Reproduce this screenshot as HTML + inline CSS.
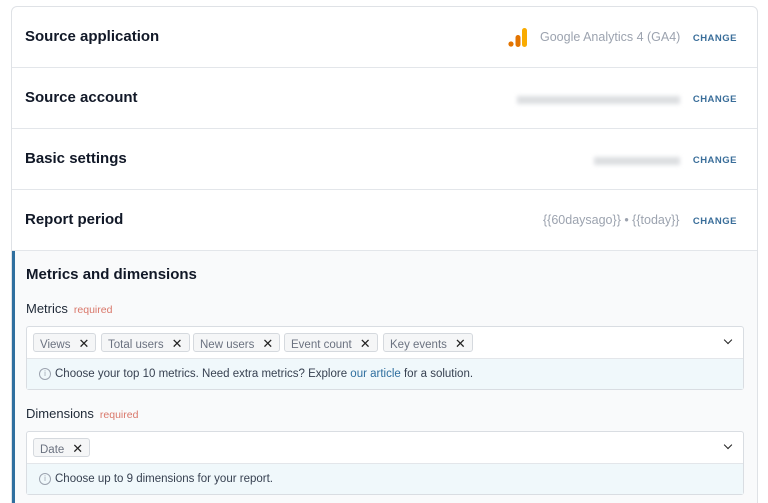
<html style="height:503px;overflow:hidden"><head><style>
body{margin:0;width:768px;height:503px;overflow:hidden;background:#fff;font-family:"Liberation Sans",sans-serif;position:relative;}
.wrap{position:absolute;left:0;top:0;width:768px;height:503px;overflow:hidden;}
.box{position:absolute;left:11px;top:6px;width:745px;height:496px;border:1px solid #dfe2e6;border-radius:6px 6px 0 0;overflow:hidden;}
.row{height:60px;border-bottom:1px solid #e3e6ea;position:relative;}
.row h{position:absolute;left:13px;top:21px;font-weight:bold;font-size:15px;color:#111827;}
.ch{position:absolute;right:20px;top:26px;font-size:9.5px;font-weight:bold;color:#3a6e9a;letter-spacing:.5px;}
.val{position:absolute;top:23px;font-size:12.5px;color:#9ca3af;}
.blur{position:absolute;height:8px;background:#dcdee1;filter:blur(2px);}
.sec{position:absolute;left:0;top:244px;width:742px;height:252px;background:#f9fafb;border-left:3px solid #2f6f9f;}
.ti{position:absolute;left:11px;font-size:15px;font-weight:bold;color:#111827;}
.lab{position:absolute;left:11px;font-size:13px;color:#1f2937;}
.lab span{color:#d9776a;font-size:10.5px;margin-left:6px;}
.inp{position:absolute;left:11px;width:716px;border:1px solid #d9dde2;border-radius:3px;background:#fff;}
.chips{height:31px;position:relative;border-bottom:1px solid #e3e6ea;}
.chip{position:absolute;top:6px;height:19px;border:1px solid #d5d9de;border-radius:3px;background:#f5f6f7;font-size:11.5px;color:#6b7280;line-height:19px;padding:0 6px;box-sizing:border-box;}
.chip b{color:#222;font-weight:normal;margin-left:8px;font-size:13px;}
.info{height:30px;background:#f0f8fb;font-size:11.5px;color:#374151;line-height:30px;padding-left:28px;position:relative;}
.info:before{content:"i";position:absolute;left:12px;top:9px;width:10px;height:10px;border:1px solid #9ca3af;border-radius:50%;font-size:8px;line-height:10px;text-align:center;color:#9ca3af;}
.car{position:absolute;right:12px;top:10px;width:5px;height:5px;border-right:1.5px solid #222;border-bottom:1.5px solid #222;transform:rotate(45deg);}
</style></head><body><div class="wrap">
<div class="box">
<div class="row"><h>Source application</h>
<svg style="position:absolute;left:496px;top:20px" width="20" height="22"><circle cx="3" cy="17" r="2.6" fill="#e37400"/><rect x="7.5" y="8" width="5" height="12" rx="2.5" fill="#e37400"/><rect x="14" y="1" width="5" height="19" rx="2.5" fill="#f9ab00"/></svg>
<div class="val" style="left:528px">Google Analytics 4 (GA4)</div><div class="ch">CHANGE</div></div>
<div class="row"><h>Source account</h><div class="blur" style="left:505px;top:28px;width:163px"></div><div class="ch">CHANGE</div></div>
<div class="row"><h>Basic settings</h><div class="blur" style="left:582px;top:28px;width:86px"></div><div class="ch">CHANGE</div></div>
<div class="row"><h>Report period</h><div class="val" style="left:531px">{{60daysago}} • {{today}}</div><div class="ch">CHANGE</div></div>
<div class="sec">
<div class="ti" style="top:15px">Metrics and dimensions</div>
<div class="lab" style="top:50px">Metrics<span>required</span></div>
<div class="inp" style="top:75px"><div class="chips">
<div class="chip" style="left:6px">Views<b>✕</b></div>
<div class="chip" style="left:74px">Total users<b>✕</b></div>
<div class="chip" style="left:166px">New users<b>✕</b></div>
<div class="chip" style="left:257px">Event count<b>✕</b></div>
<div class="chip" style="left:356px">Key events<b>✕</b></div>
<div class="car"></div></div>
<div class="info">Choose your top 10 metrics. Need extra metrics? Explore <span style="color:#2f6f9f">our article</span> for a solution.</div></div>
<div class="lab" style="top:155px">Dimensions<span>required</span></div>
<div class="inp" style="top:180px"><div class="chips">
<div class="chip" style="left:6px">Date<b>✕</b></div><div class="car"></div></div>
<div class="info">Choose up to 9 dimensions for your report.</div></div>
</div>
</div>
</div></body></html>
